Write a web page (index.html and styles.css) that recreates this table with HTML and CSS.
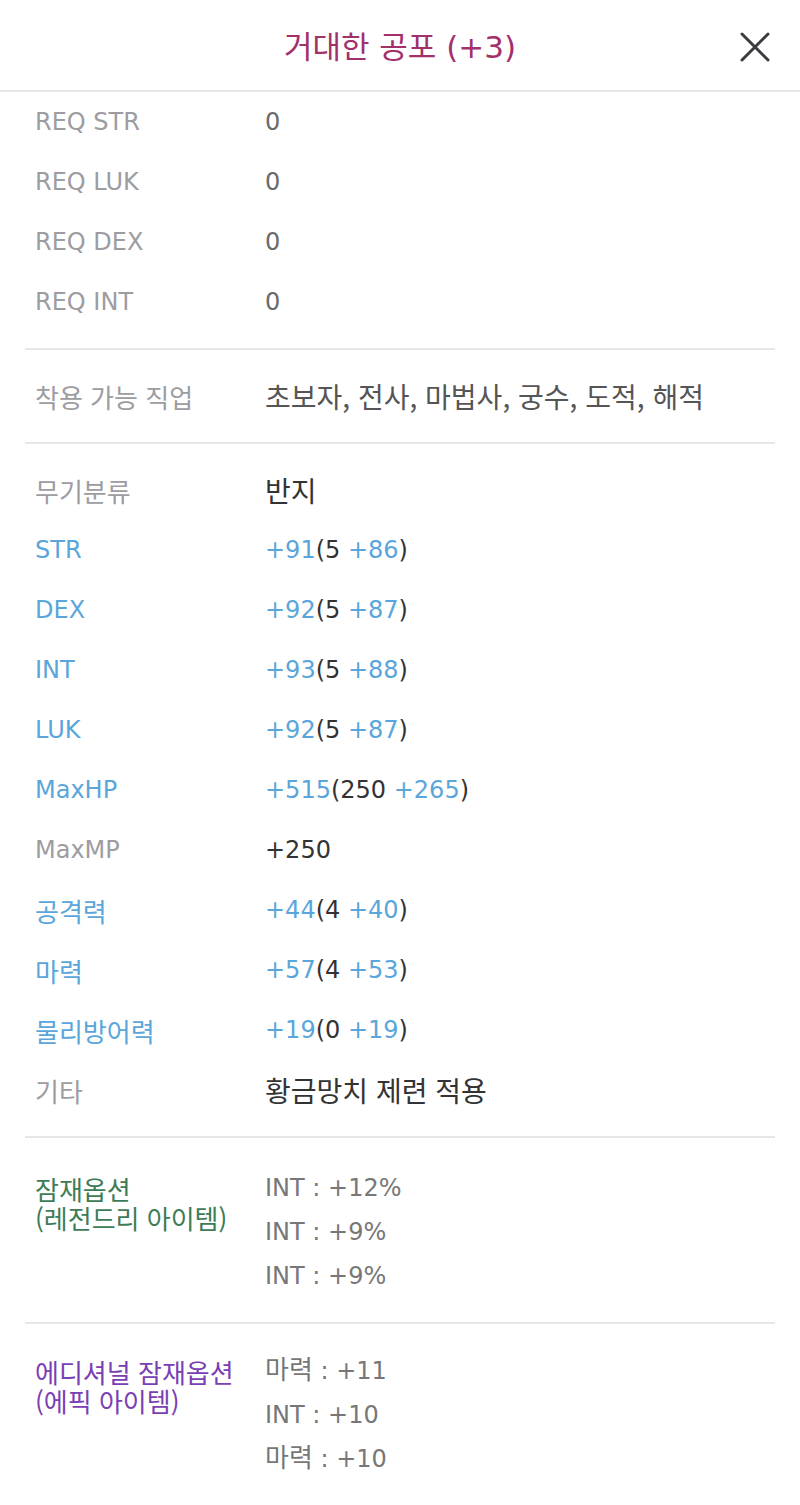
FILE: index.html
```html
<!DOCTYPE html>
<html lang="ko">
<head>
<meta charset="utf-8">
<title>거대한 공포 (+3)</title>
<link rel="stylesheet" href="styles.css">
</head>
<body>
<header class="header">
  <div class="header-side"></div>
  <h1 class="title">거대한 공포 (+3)</h1>
  <div class="header-side header-right">
    <button class="close" aria-label="닫기">
      <svg width="30" height="30" viewBox="0 0 30 30"><path d="M2 2 L28 28 M28 2 L2 28" stroke="#3b3b42" stroke-width="3" stroke-linecap="round" fill="none"/></svg>
    </button>
  </div>
</header>

<main class="content">
  <section class="section first">
    <div class="row"><span class="label">REQ STR</span><span class="value req">0</span></div>
    <div class="row"><span class="label">REQ LUK</span><span class="value req">0</span></div>
    <div class="row"><span class="label">REQ DEX</span><span class="value req">0</span></div>
    <div class="row"><span class="label">REQ INT</span><span class="value req">0</span></div>
  </section>

  <section class="section">
    <div class="row"><span class="label ko">착용 가능 직업</span><span class="value kov jobs">초보자, 전사, 마법사, 궁수, 도적, 해적</span></div>
  </section>

  <section class="section">
    <div class="row"><span class="label ko">무기분류</span><span class="value kov">반지</span></div>
    <div class="row"><span class="label blue">STR</span><span class="value"><span class="blue">+91</span>(5 <span class="blue">+86</span>)</span></div>
    <div class="row"><span class="label blue">DEX</span><span class="value"><span class="blue">+92</span>(5 <span class="blue">+87</span>)</span></div>
    <div class="row"><span class="label blue">INT</span><span class="value"><span class="blue">+93</span>(5 <span class="blue">+88</span>)</span></div>
    <div class="row"><span class="label blue">LUK</span><span class="value"><span class="blue">+92</span>(5 <span class="blue">+87</span>)</span></div>
    <div class="row"><span class="label blue">MaxHP</span><span class="value"><span class="blue">+515</span>(250 <span class="blue">+265</span>)</span></div>
    <div class="row"><span class="label">MaxMP</span><span class="value">+250</span></div>
    <div class="row"><span class="label blue ko">공격력</span><span class="value"><span class="blue">+44</span>(4 <span class="blue">+40</span>)</span></div>
    <div class="row"><span class="label blue ko">마력</span><span class="value"><span class="blue">+57</span>(4 <span class="blue">+53</span>)</span></div>
    <div class="row"><span class="label blue ko">물리방어력</span><span class="value"><span class="blue">+19</span>(0 <span class="blue">+19</span>)</span></div>
    <div class="row"><span class="label ko">기타</span><span class="value kov">황금망치 제련 적용</span></div>
  </section>

  <section class="section options">
    <div class="opt-row">
      <div class="opt-label green ko">잠재옵션<br>(레전드리 아이템)</div>
      <div class="opt-values">
        <div>INT : +12%</div>
        <div>INT : +9%</div>
        <div>INT : +9%</div>
      </div>
    </div>
  </section>

  <section class="section options">
    <div class="opt-row">
      <div class="opt-label purple ko">에디셔널 잠재옵션<br>(에픽 아이템)</div>
      <div class="opt-values">
        <div><span class="kov-opt">마력</span> : +11</div>
        <div>INT : +10</div>
        <div><span class="kov-opt">마력</span> : +10</div>
      </div>
    </div>
  </section>
</main>
</body>
</html>
```

FILE: styles.css
```css
* { box-sizing: border-box; }

html, body {
  margin: 0;
  padding: 0;
  background: #ffffff;
}

body {
  font-family: "DejaVu Sans", "Noto Sans CJK KR", sans-serif;
  font-size: 24px;
  color: #333333;
}

.header {
  height: 92px;
  border-bottom: 2px solid #e6e6e6;
  display: grid;
  grid-template-columns: 1fr auto 1fr;
  align-items: center;
}

.title {
  margin: 0;
  font-size: 31px;
  font-weight: normal;
  color: #a2306a;
  line-height: 90px;
  padding-top: 2px;
  white-space: nowrap;
}

.header-right {
  display: flex;
  justify-content: flex-end;
  padding-right: 30px;
}

.close {
  border: 0;
  background: none;
  padding: 0;
  width: 30px;
  height: 30px;
  display: block;
  margin-top: 2px;
}

.close svg { display: block; }

.content {
  padding: 0 25px;
}

.section {
  padding: 16px 0;
  border-top: 2px solid #e6e6e6;
}

.section.first {
  border-top: 0;
  padding-top: 0;
}

.row {
  display: grid;
  grid-template-columns: 230px 1fr;
  align-items: center;
  height: 60px;
  padding-left: 10px;
}

.label {
  color: #9c9ca1;
}

.value {
  color: #333333;
}

.value.req {
  color: #6a6a6a;
}

.value.jobs {
  color: #555555;
}

.ko {
  font-family: "Noto Sans CJK KR", "DejaVu Sans", sans-serif;
  font-size: 26px;
}

.kov {
  font-family: "Noto Sans CJK KR", "DejaVu Sans", sans-serif;
  font-size: 28px;
}

.kov-opt {
  font-family: "Noto Sans CJK KR", "DejaVu Sans", sans-serif;
  font-size: 26px;
  line-height: 1;
}

.blue {
  color: #5aa6db;
}

.green {
  color: #3e7b57;
}

.purple {
  color: #7a40b3;
}

.options {
  padding: 28px 0 24px;
}

.options + .options {
  padding-top: 25px;
}

.opt-row {
  display: grid;
  grid-template-columns: 230px 1fr;
  padding-left: 10px;
}

.opt-label {
  line-height: 29px;
  padding-top: 8px;
}

.opt-values {
  line-height: 44px;
  color: #777777;
}
```
